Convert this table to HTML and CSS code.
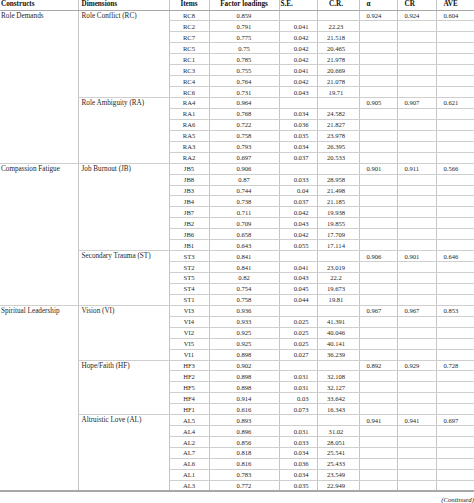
FILE: index.html
```html
<!DOCTYPE html>
<html>
<head>
<meta charset="utf-8">
<link rel="stylesheet" href="styles.css">
</head>
<body>
<table class="cfa">
<colgroup>
<col class="c-con"><col class="c-dim"><col class="c-item"><col class="c-fl"><col class="c-se"><col class="c-cr"><col class="c-a"><col class="c-crel"><col class="c-ave">
</colgroup>
<thead>
<tr><th class="con">Constructs</th><th class="dim">Dimensions</th><th class="item">Items</th><th class="fl">Factor loadings</th><th class="se">S.E.</th><th class="cr">C.R.</th><th class="rel">α</th><th class="rel">CR</th><th class="rel">AVE</th></tr>
</thead>
<tbody>
<tr><td class="con" rowspan="14">Role Demands</td><td class="dim" rowspan="8">Role Conflict (RC)</td><td class="item">RC8</td><td class="fl">0.859</td><td class="se"></td><td class="cr"></td><td class="rel">0.924</td><td class="rel">0.924</td><td class="rel">0.604</td></tr>
<tr><td class="item">RC2</td><td class="fl">0.791</td><td class="se">0.041</td><td class="cr">22.23</td><td class="rel"></td><td class="rel"></td><td class="rel"></td></tr>
<tr><td class="item">RC7</td><td class="fl">0.775</td><td class="se">0.042</td><td class="cr">21.518</td><td class="rel"></td><td class="rel"></td><td class="rel"></td></tr>
<tr><td class="item">RC5</td><td class="fl">0.75</td><td class="se">0.042</td><td class="cr">20.465</td><td class="rel"></td><td class="rel"></td><td class="rel"></td></tr>
<tr><td class="item">RC1</td><td class="fl">0.785</td><td class="se">0.042</td><td class="cr">21.978</td><td class="rel"></td><td class="rel"></td><td class="rel"></td></tr>
<tr><td class="item">RC3</td><td class="fl">0.755</td><td class="se">0.041</td><td class="cr">20.669</td><td class="rel"></td><td class="rel"></td><td class="rel"></td></tr>
<tr><td class="item">RC4</td><td class="fl">0.764</td><td class="se">0.042</td><td class="cr">21.078</td><td class="rel"></td><td class="rel"></td><td class="rel"></td></tr>
<tr><td class="item">RC6</td><td class="fl">0.731</td><td class="se">0.043</td><td class="cr">19.71</td><td class="rel"></td><td class="rel"></td><td class="rel"></td></tr>
<tr><td class="dim" rowspan="6">Role Ambiguity (RA)</td><td class="item">RA4</td><td class="fl">0.964</td><td class="se"></td><td class="cr"></td><td class="rel">0.905</td><td class="rel">0.907</td><td class="rel">0.621</td></tr>
<tr><td class="item">RA1</td><td class="fl">0.768</td><td class="se">0.034</td><td class="cr">24.582</td><td class="rel"></td><td class="rel"></td><td class="rel"></td></tr>
<tr><td class="item">RA6</td><td class="fl">0.722</td><td class="se">0.036</td><td class="cr">21.827</td><td class="rel"></td><td class="rel"></td><td class="rel"></td></tr>
<tr><td class="item">RA5</td><td class="fl">0.758</td><td class="se">0.035</td><td class="cr">23.978</td><td class="rel"></td><td class="rel"></td><td class="rel"></td></tr>
<tr><td class="item">RA3</td><td class="fl">0.793</td><td class="se">0.034</td><td class="cr">26.395</td><td class="rel"></td><td class="rel"></td><td class="rel"></td></tr>
<tr><td class="item">RA2</td><td class="fl">0.697</td><td class="se">0.037</td><td class="cr">20.533</td><td class="rel"></td><td class="rel"></td><td class="rel"></td></tr>
<tr><td class="con" rowspan="13">Compassion Fatigue</td><td class="dim" rowspan="8">Job Burnout (JB)</td><td class="item">JB5</td><td class="fl">0.906</td><td class="se"></td><td class="cr"></td><td class="rel">0.901</td><td class="rel">0.911</td><td class="rel">0.566</td></tr>
<tr><td class="item">JB8</td><td class="fl">0.87</td><td class="se">0.033</td><td class="cr">28.958</td><td class="rel"></td><td class="rel"></td><td class="rel"></td></tr>
<tr><td class="item">JB3</td><td class="fl">0.744</td><td class="se">0.04</td><td class="cr">21.498</td><td class="rel"></td><td class="rel"></td><td class="rel"></td></tr>
<tr><td class="item">JB4</td><td class="fl">0.738</td><td class="se">0.037</td><td class="cr">21.185</td><td class="rel"></td><td class="rel"></td><td class="rel"></td></tr>
<tr><td class="item">JB7</td><td class="fl">0.711</td><td class="se">0.042</td><td class="cr">19.938</td><td class="rel"></td><td class="rel"></td><td class="rel"></td></tr>
<tr><td class="item">JB2</td><td class="fl">0.709</td><td class="se">0.043</td><td class="cr">19.855</td><td class="rel"></td><td class="rel"></td><td class="rel"></td></tr>
<tr><td class="item">JB6</td><td class="fl">0.658</td><td class="se">0.042</td><td class="cr">17.709</td><td class="rel"></td><td class="rel"></td><td class="rel"></td></tr>
<tr><td class="item">JB1</td><td class="fl">0.643</td><td class="se">0.055</td><td class="cr">17.114</td><td class="rel"></td><td class="rel"></td><td class="rel"></td></tr>
<tr><td class="dim" rowspan="5">Secondary Trauma (ST)</td><td class="item">ST3</td><td class="fl">0.841</td><td class="se"></td><td class="cr"></td><td class="rel">0.906</td><td class="rel">0.901</td><td class="rel">0.646</td></tr>
<tr><td class="item">ST2</td><td class="fl">0.841</td><td class="se">0.041</td><td class="cr">23.019</td><td class="rel"></td><td class="rel"></td><td class="rel"></td></tr>
<tr><td class="item">ST5</td><td class="fl">0.82</td><td class="se">0.043</td><td class="cr">22.2</td><td class="rel"></td><td class="rel"></td><td class="rel"></td></tr>
<tr><td class="item">ST4</td><td class="fl">0.754</td><td class="se">0.045</td><td class="cr">19.673</td><td class="rel"></td><td class="rel"></td><td class="rel"></td></tr>
<tr><td class="item">ST1</td><td class="fl">0.758</td><td class="se">0.044</td><td class="cr">19.81</td><td class="rel"></td><td class="rel"></td><td class="rel"></td></tr>
<tr><td class="con last" rowspan="17">Spiritual Leadership</td><td class="dim" rowspan="5">Vision (VI)</td><td class="item">VI3</td><td class="fl">0.936</td><td class="se"></td><td class="cr"></td><td class="rel">0.967</td><td class="rel">0.967</td><td class="rel">0.853</td></tr>
<tr><td class="item">VI4</td><td class="fl">0.933</td><td class="se">0.025</td><td class="cr">41.391</td><td class="rel"></td><td class="rel"></td><td class="rel"></td></tr>
<tr><td class="item">VI2</td><td class="fl">0.925</td><td class="se">0.025</td><td class="cr">40.046</td><td class="rel"></td><td class="rel"></td><td class="rel"></td></tr>
<tr><td class="item">VI5</td><td class="fl">0.925</td><td class="se">0.025</td><td class="cr">40.141</td><td class="rel"></td><td class="rel"></td><td class="rel"></td></tr>
<tr><td class="item">VI1</td><td class="fl">0.898</td><td class="se">0.027</td><td class="cr">36.239</td><td class="rel"></td><td class="rel"></td><td class="rel"></td></tr>
<tr><td class="dim" rowspan="5">Hope/Faith (HF)</td><td class="item">HF3</td><td class="fl">0.902</td><td class="se"></td><td class="cr"></td><td class="rel">0.892</td><td class="rel">0.929</td><td class="rel">0.728</td></tr>
<tr><td class="item">HF2</td><td class="fl">0.898</td><td class="se">0.031</td><td class="cr">32.108</td><td class="rel"></td><td class="rel"></td><td class="rel"></td></tr>
<tr><td class="item">HF5</td><td class="fl">0.898</td><td class="se">0.031</td><td class="cr">32.127</td><td class="rel"></td><td class="rel"></td><td class="rel"></td></tr>
<tr><td class="item">HF4</td><td class="fl">0.914</td><td class="se">0.03</td><td class="cr">33.642</td><td class="rel"></td><td class="rel"></td><td class="rel"></td></tr>
<tr><td class="item">HF1</td><td class="fl">0.616</td><td class="se">0.073</td><td class="cr">16.343</td><td class="rel"></td><td class="rel"></td><td class="rel"></td></tr>
<tr><td class="dim last" rowspan="7">Altruistic Love (AL)</td><td class="item">AL5</td><td class="fl">0.893</td><td class="se"></td><td class="cr"></td><td class="rel">0.941</td><td class="rel">0.941</td><td class="rel">0.697</td></tr>
<tr><td class="item">AL4</td><td class="fl">0.896</td><td class="se">0.031</td><td class="cr">31.02</td><td class="rel"></td><td class="rel"></td><td class="rel"></td></tr>
<tr><td class="item">AL2</td><td class="fl">0.856</td><td class="se">0.033</td><td class="cr">28.051</td><td class="rel"></td><td class="rel"></td><td class="rel"></td></tr>
<tr><td class="item">AL7</td><td class="fl">0.818</td><td class="se">0.034</td><td class="cr">25.541</td><td class="rel"></td><td class="rel"></td><td class="rel"></td></tr>
<tr><td class="item">AL6</td><td class="fl">0.816</td><td class="se">0.036</td><td class="cr">25.433</td><td class="rel"></td><td class="rel"></td><td class="rel"></td></tr>
<tr><td class="item">AL1</td><td class="fl">0.783</td><td class="se">0.034</td><td class="cr">23.549</td><td class="rel"></td><td class="rel"></td><td class="rel"></td></tr>
<tr class="lastrow"><td class="item">AL3</td><td class="fl">0.772</td><td class="se">0.035</td><td class="cr">22.949</td><td class="rel"></td><td class="rel"></td><td class="rel"></td></tr>
</tbody>
</table>
<p class="continued"><em>(Continued)</em></p>
</body>
</html>
```

FILE: styles.css
```css
html, body {
  margin: 0;
  padding: 0;
  background: #ffffff;
  overflow: hidden;
}

body {
  width: 474px;
  height: 503px;
  font-family: "Liberation Serif", "Times New Roman", serif;
  color: #1f1f1f;
}

.cfa {
  width: 474px;
  border-collapse: collapse;
  table-layout: fixed;
  font-size: 7.2px;
  line-height: 9px;
}

.c-con { width: 78px; }
.c-dim { width: 91px; }
.c-item { width: 40px; }
.c-fl { width: 70px; }
.c-se { width: 38px; }
.c-cr { width: 42px; }
.c-a { width: 38px; }
.c-crel { width: 39px; }
.c-ave { width: 38px; }

.cfa th,
.cfa td {
  padding: 0;
  border-left: 1px solid #c4c4c4;
  border-bottom: 1px solid #cfcfcf;
  white-space: nowrap;
  overflow: hidden;
  vertical-align: middle;
}

.cfa th:first-child,
.cfa td.con {
  border-left: none;
}

.cfa thead tr {
  height: 10px;
}

.cfa th {
  font-weight: bold;
  text-align: left;
  border-bottom: 1px solid #a8a8a8;
  color: #111;
}

.cfa tbody tr {
  height: 10.95px;
}

.cfa td {
  font-size: 6.6px;
}

.cfa td.con,
.cfa td.dim {
  font-size: 7.2px;
  vertical-align: top;
  padding-top: 1px;
}

.con { padding-left: 1px !important; }
.dim { padding-left: 3px !important; }
.item { text-align: center !important; }
.fl { text-align: center !important; }
th.se { padding-left: 1px !important; }
td.se { text-align: right; padding-right: 8px !important; }
.cr { text-align: center !important; padding-right: 4px !important; }
.rel { padding-left: 7px !important; }

.cfa td.last,
.cfa tr.lastrow td {
  border-bottom: 2px solid #a8a8a8;
}

.continued {
  margin: 4px 0 0 0;
  text-align: right;
  font-size: 6.8px;
  line-height: 8px;
  color: #222;
}
```
